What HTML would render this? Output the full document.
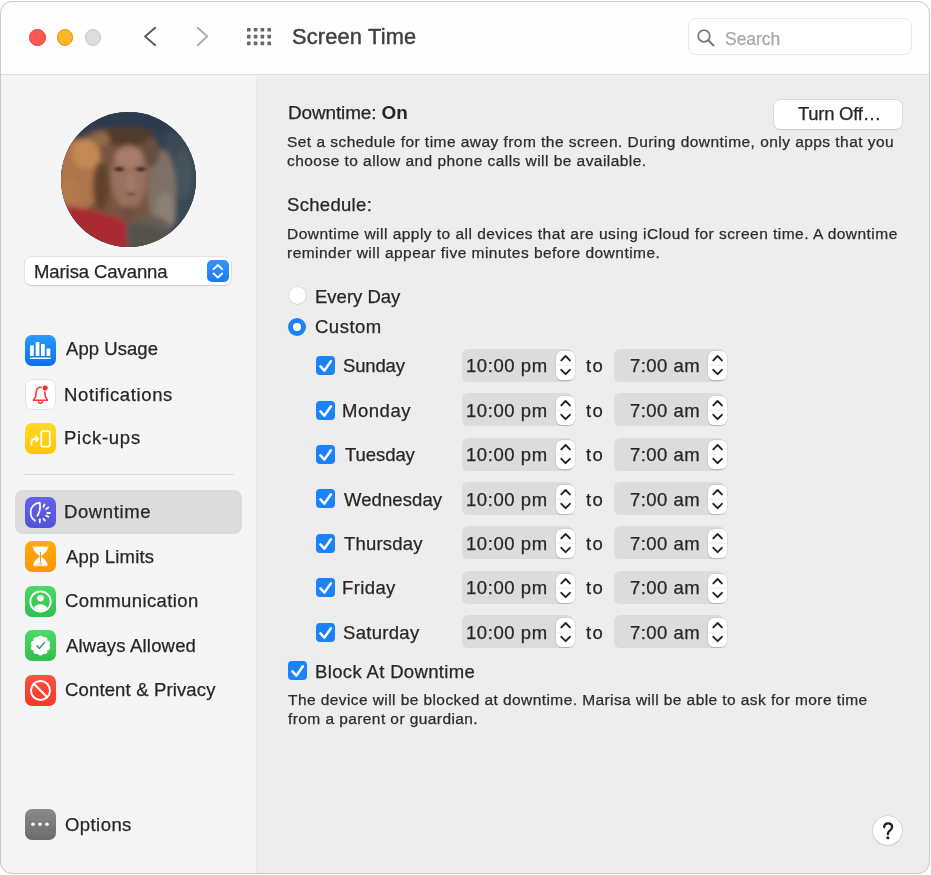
<!DOCTYPE html>
<html><head><meta charset="utf-8"><style>
*{box-sizing:border-box}
html,body{margin:0;padding:0;width:931px;height:875px;overflow:hidden;background:#fff;font-family:"Liberation Sans",sans-serif;color:#262626}
.clip{position:absolute;left:0;top:0;width:931px;height:875px;clip-path:inset(1px 1px 1px 0px round 12px);background:#ededed}
.frame{position:absolute;left:0;top:1px;width:930px;height:873px;border:1px solid #c9c9c9;border-radius:12px;pointer-events:none}
.a{position:absolute;white-space:nowrap;line-height:1;will-change:transform;-webkit-text-stroke:0.25px currentColor}
.titlebar{position:absolute;left:0;top:0;width:931px;height:75px;background:#fefefe;border-bottom:1px solid #dedede}
.sidebar{position:absolute;left:0;top:75px;width:256px;height:800px;background:#f5f5f5}
.sep{position:absolute;left:256px;top:75px;width:4px;height:800px;background:linear-gradient(90deg,#e6e6e6,#ebebeb 40%,#ededed)}
.dot{position:absolute;width:16.6px;height:16.6px;border-radius:50%}
.icon{position:absolute;left:25px;width:31px;height:31px;border-radius:7px;overflow:hidden}
.icon svg{position:absolute;left:0;top:0}
.cb{position:absolute;width:19px;height:19px;border-radius:4px;background:#1a82fb}
.cb svg{position:absolute;left:0;top:0}
</style></head><body>
<div class="clip">
<div class="titlebar"></div>
<div class="dot" style="left:29.1px;top:29.2px;background:#fe5a52;border:1px solid #d8443d"></div>
<div class="dot" style="left:56.8px;top:29.2px;background:#feb526;border:1px solid #d69b28"></div>
<div class="dot" style="left:84.6px;top:29.2px;background:#dedede;border:1px solid #c8c8c8"></div>
<svg class="a" style="left:140px;top:24px" width="20" height="26" viewBox="0 0 20 26"><path d="M15.2 3.8 L5 12.4 L15.2 21.2" fill="none" stroke="#555" stroke-width="1.9" stroke-linecap="round" stroke-linejoin="round"/></svg>
<svg class="a" style="left:191px;top:24px" width="20" height="26" viewBox="0 0 20 26"><path d="M6.7 3.8 L16.3 12.4 L6.7 21.2" fill="none" stroke="#aaa" stroke-width="1.9" stroke-linecap="round" stroke-linejoin="round"/></svg>
<svg class="a" style="left:246px;top:27px" width="26" height="20" viewBox="0 0 26 20"><g fill="#666"><rect x="1.0" y="1.0" width="3.6" height="3.6" rx="0.6"/><rect x="7.8" y="1.0" width="3.6" height="3.6" rx="0.6"/><rect x="14.6" y="1.0" width="3.6" height="3.6" rx="0.6"/><rect x="21.4" y="1.0" width="3.6" height="3.6" rx="0.6"/><rect x="1.0" y="7.8" width="3.6" height="3.6" rx="0.6"/><rect x="7.8" y="7.8" width="3.6" height="3.6" rx="0.6"/><rect x="14.6" y="7.8" width="3.6" height="3.6" rx="0.6"/><rect x="21.4" y="7.8" width="3.6" height="3.6" rx="0.6"/><rect x="1.0" y="14.6" width="3.6" height="3.6" rx="0.6"/><rect x="7.8" y="14.6" width="3.6" height="3.6" rx="0.6"/><rect x="14.6" y="14.6" width="3.6" height="3.6" rx="0.6"/><rect x="21.4" y="14.6" width="3.6" height="3.6" rx="0.6"/></g></svg>
<div class="a" style="left:291.8px;top:26.4px;font-size:21.8px;letter-spacing:0.18px;color:#404040;-webkit-text-stroke:0.45px #404040">Screen Time</div>
<div class="a" style="left:688px;top:18px;width:224px;height:37px;border:1px solid #e8e8e8;border-radius:8px;background:#fff"></div>
<svg class="a" style="left:696px;top:28px" width="22" height="20" viewBox="0 0 22 20"><circle cx="8" cy="8" r="5.8" fill="none" stroke="#777" stroke-width="1.8"/><path d="M12.2 12.2 L17.5 17.5" stroke="#777" stroke-width="2" stroke-linecap="round"/></svg>
<div class="a" style="left:725.4px;top:31px;font-size:17.5px;letter-spacing:-0.04px;color:#a9a9a9">Search</div>
<div class="sidebar"></div><div class="sep"></div><div class="a" style="left:256px;top:75px;width:675px;height:5px;background:linear-gradient(#f3f3f3,#ededed)"></div>
<div class="a" style="left:61.2px;top:111.5px;width:135px;height:135px;border-radius:50%;overflow:hidden;background:#4a4f55"><svg width="135" height="135" viewBox="0 0 135 135" style="position:absolute;left:0;top:0"><defs><filter id="blr" x="-20%" y="-20%" width="140%" height="140%"><feGaussianBlur stdDeviation="2.6"/></filter><filter id="blr2"><feGaussianBlur stdDeviation="1.2"/></filter></defs>
<rect width="135" height="135" fill="#323e4e"/>
<g filter="url(#blr)">
<rect x="0" y="0" width="135" height="20" fill="#2e3b50"/>
<rect x="104" y="20" width="36" height="95" fill="#3b4856"/>
<ellipse cx="122" cy="62" rx="9" ry="26" fill="#45525c"/>
<ellipse cx="54" cy="72" rx="60" ry="56" fill="#775440"/>
<ellipse cx="17" cy="62" rx="25" ry="36" fill="#ad7548"/>
<ellipse cx="25" cy="42" rx="14" ry="15" fill="#c28955"/>
<ellipse cx="8" cy="80" rx="12" ry="14" fill="#b07a4c"/>
<ellipse cx="40" cy="74" rx="8" ry="24" fill="#5e432f"/>
<ellipse cx="66" cy="24" rx="27" ry="10" fill="#513a2c"/>
<ellipse cx="40" cy="27" rx="9" ry="7" fill="#93694a"/>
<ellipse cx="101" cy="80" rx="14" ry="42" fill="#7f7167"/>
<ellipse cx="104" cy="100" rx="10" ry="20" fill="#8c7f73"/>
<ellipse cx="90" cy="40" rx="9" ry="15" fill="#654f42"/>
<ellipse cx="90" cy="118" rx="20" ry="14" fill="#655d56"/>
<ellipse cx="68" cy="65" rx="18" ry="32" fill="#9a7060"/>
<ellipse cx="68" cy="45" rx="14" ry="10" fill="#a97d6c"/>
<ellipse cx="70" cy="70" rx="5" ry="9" fill="#a47a6a"/>
<path d="M6 94 C22 96 45 100 65 110 L66 140 L6 140 Z" fill="#aa2a33"/>
<path d="M66 112 C80 110 100 116 125 124 L125 140 L66 140 Z" fill="#57524e"/>
<ellipse cx="67" cy="101" rx="8" ry="7" fill="#70503f"/>
</g>
<g filter="url(#blr2)">
<ellipse cx="58" cy="57" rx="6" ry="2.6" fill="#5a3e36" opacity="0.8"/>
<ellipse cx="80" cy="57" rx="6" ry="2.6" fill="#5a3e36" opacity="0.8"/>
<ellipse cx="58" cy="57.5" rx="3" ry="1.3" fill="#2e201c" opacity="0.9"/>
<ellipse cx="80" cy="57.5" rx="3" ry="1.3" fill="#2e201c" opacity="0.9"/>
<ellipse cx="70" cy="82" rx="5" ry="1.3" fill="#6a4640" opacity="0.7"/>
</g>
</svg>
</div>
<div class="a" style="left:25.2px;top:256.8px;width:206.2px;height:28px;background:#fff;border-radius:6px;box-shadow:0 0 0 0.5px rgba(0,0,0,0.14),0 1px 1.5px rgba(0,0,0,0.10)"></div>
<div class="a" style="left:34.3px;top:263.3px;font-size:18.5px;letter-spacing:-0.085px">Marisa Cavanna</div>
<div class="a" style="left:207.2px;top:259.6px;width:21.8px;height:22.4px;border-radius:5px;background:linear-gradient(#3594ff,#1a7af5)"><svg width="22" height="23" viewBox="0 0 22 23" style="position:absolute;left:0;top:0"><path d="M6.6 9.1 L10.9 5 L15.2 9.1 M6.6 13.5 L10.9 17.6 L15.2 13.5" fill="none" stroke="#fff" stroke-width="1.9" stroke-linecap="round" stroke-linejoin="round"/></svg></div>
<div class="a" style="left:24px;top:474px;width:210px;height:1px;background:#dadada"></div>
<div class="a" style="left:15px;top:490px;width:227px;height:44px;border-radius:8px;background:#dcdcdc"></div>
<div class="icon" style="top:334.9px"><svg width="31" height="31" viewBox="0 0 31 31"><defs><linearGradient id="gAU" x1="0" y1="0" x2="0" y2="1"><stop offset="0" stop-color="#2a9bff"/><stop offset="1" stop-color="#0a6fe8"/></linearGradient></defs><rect width="31" height="31" fill="url(#gAU)"/><g fill="#fff"><rect x="5.1" y="10.2" width="3.7" height="10.9" rx="0.7"/><rect x="10.7" y="7" width="3.7" height="14.1" rx="0.7"/><rect x="16" y="9" width="3.8" height="12.1" rx="0.7"/><rect x="21.5" y="13.6" width="3.8" height="7.5" rx="0.7"/><rect x="5" y="22.4" width="21" height="1.5" rx="0.6"/></g></svg></div>
<div class="a" style="left:65.6px;top:340.4px;font-size:18.5px;letter-spacing:0.05px">App Usage</div>
<div class="icon" style="top:378.7px"><svg width="31" height="31" viewBox="0 0 31 31"><rect x="0.5" y="0.5" width="30" height="30" rx="6.5" fill="#fdfdfd" stroke="#e1e1e1"/><path d="M15.5 8.2 C12.9 8.2 11.4 10.6 11.1 13.4 L10.7 17.6 L8.6 21.2 L22.4 21.2 L20.3 17.6 L19.9 13.4 C19.6 10.6 18.1 8.2 15.5 8.2 Z" fill="none" stroke="#ef3d35" stroke-width="1.6" stroke-linejoin="round"/><path d="M13.5 22.3 A2 2 0 0 0 17.5 22.3" fill="none" stroke="#ef3d35" stroke-width="1.5"/><circle cx="20.2" cy="9" r="3.1" fill="#ef2f2a" stroke="#fdfdfd" stroke-width="1"/></svg></div>
<div class="a" style="left:63.6px;top:385.5px;font-size:18.5px;letter-spacing:0.633px">Notifications</div>
<div class="icon" style="top:423.2px"><svg width="31" height="31" viewBox="0 0 31 31"><defs><linearGradient id="gPU" x1="0" y1="0" x2="0" y2="1"><stop offset="0" stop-color="#ffd829"/><stop offset="1" stop-color="#ffc700"/></linearGradient></defs><rect width="31" height="31" fill="url(#gPU)"/><rect x="16.2" y="8.2" width="8.6" height="15.4" rx="1.4" fill="none" stroke="#fff" stroke-width="1.8"/><path d="M6.4 22 L6.4 19.5 Q6.4 16 9.8 16 L12.4 16" fill="none" stroke="#fff" stroke-width="1.8" stroke-linecap="round"/><path d="M10.6 13.4 L13.2 16 L10.6 18.6" fill="none" stroke="#fff" stroke-width="1.8" stroke-linecap="round" stroke-linejoin="round"/></svg></div>
<div class="a" style="left:63.6px;top:429.4px;font-size:18.5px;letter-spacing:0.743px">Pick-ups</div>
<div class="icon" style="top:496.7px"><svg width="31" height="31" viewBox="0 0 31 31"><defs><linearGradient id="gDT" x1="0" y1="0" x2="0" y2="1"><stop offset="0" stop-color="#6462ec"/><stop offset="1" stop-color="#5352d8"/></linearGradient></defs><rect width="31" height="31" fill="url(#gDT)"/><path d="M14.6 5.7 C9.6 6.3 5.6 10 5.6 15 C5.6 19 7.6 22.2 10 23.8" fill="none" stroke="#fff" stroke-width="1.7" stroke-linecap="round"/><path d="M14.8 6.2 C15.4 9.5 15.2 14.5 12.4 18.8" fill="none" stroke="#fff" stroke-width="1.7" stroke-linecap="round"/><g stroke="#fff" stroke-width="1.8" stroke-linecap="round"><path d="M19.5 7.5 L18.4 9.8"/><path d="M23.3 10.5 L21.1 12"/><path d="M25 16 L22.4 16"/><path d="M23.3 19.8 L21.1 18.6"/><path d="M19.9 23.6 L18.5 21.7"/><path d="M14.8 25.3 L14.8 22.3"/></g></svg></div>
<div class="a" style="left:63.6px;top:503.2px;font-size:18.5px;letter-spacing:0.6px">Downtime</div>
<div class="icon" style="top:541.4px"><svg width="31" height="31" viewBox="0 0 31 31"><defs><linearGradient id="gAL" x1="0" y1="0" x2="0" y2="1"><stop offset="0" stop-color="#ffab12"/><stop offset="1" stop-color="#ff9500"/></linearGradient></defs><rect width="31" height="31" fill="url(#gAL)"/><path d="M8.2 6 L22.8 6 Q22.8 9.6 19.4 12.4 L16.3 15 L16.3 15.6 L19.4 18.3 Q22.8 21.2 22.8 24.8 L8.2 24.8 Q8.2 21.2 11.6 18.3 L14.7 15.6 L14.7 15 L11.6 12.4 Q8.2 9.6 8.2 6 Z" fill="#fff"/><path d="M15.5 11 L15.5 21.5" stroke="#e0a030" stroke-width="1.1"/><path d="M12.5 23.6 Q15.5 19.8 18.5 23.6 Z" fill="#f5c060"/><rect x="7.2" y="4.8" width="16.6" height="1" fill="#ffd060"/><rect x="7.2" y="24.8" width="16.6" height="1" fill="#ffb040"/></svg></div>
<div class="a" style="left:65.6px;top:547.7px;font-size:18.5px;letter-spacing:0.189px">App Limits</div>
<div class="icon" style="top:585.7px"><svg width="31" height="31" viewBox="0 0 31 31"><defs><linearGradient id="gCM" x1="0" y1="0" x2="0" y2="1"><stop offset="0" stop-color="#4cd964"/><stop offset="1" stop-color="#30c04f"/></linearGradient></defs><rect width="31" height="31" fill="url(#gCM)"/><circle cx="15.5" cy="15.5" r="10.2" fill="none" stroke="#fff" stroke-width="1.8"/><circle cx="15.5" cy="12.3" r="3.2" fill="#fff"/><path d="M9 22 Q10.8 18.3 15.5 18.3 Q20.2 18.3 22 22 Q19.3 24.8 15.5 24.8 Q11.7 24.8 9 22 Z" fill="#fff"/></svg></div>
<div class="a" style="left:64.6px;top:591.8px;font-size:18.5px;letter-spacing:0.4px">Communication</div>
<div class="icon" style="top:630.0px"><svg width="31" height="31" viewBox="0 0 31 31"><defs><linearGradient id="gAA" x1="0" y1="0" x2="0" y2="1"><stop offset="0" stop-color="#4cd964"/><stop offset="1" stop-color="#30c04f"/></linearGradient></defs><rect width="31" height="31" fill="url(#gAA)"/><g fill="#fff"><circle cx="15.5" cy="15.5" r="8"/><circle cx="22.38" cy="17.63" r="2.7"/><circle cx="19.81" cy="21.26" r="2.7"/><circle cx="15.60" cy="22.70" r="2.7"/><circle cx="11.35" cy="21.38" r="2.7"/><circle cx="8.68" cy="17.82" r="2.7"/><circle cx="8.62" cy="13.37" r="2.7"/><circle cx="11.19" cy="9.74" r="2.7"/><circle cx="15.40" cy="8.30" r="2.7"/><circle cx="19.65" cy="9.62" r="2.7"/><circle cx="22.32" cy="13.18" r="2.7"/></g><path d="M11.8 15.8 L14.4 18.4 L19.4 12.6" fill="none" stroke="#4a9a5e" stroke-width="1.6" stroke-linecap="round" stroke-linejoin="round"/></svg></div>
<div class="a" style="left:65.6px;top:636.8px;font-size:18.5px;letter-spacing:0.185px">Always Allowed</div>
<div class="icon" style="top:674.7px"><svg width="31" height="31" viewBox="0 0 31 31"><defs><linearGradient id="gCP" x1="0" y1="0" x2="0" y2="1"><stop offset="0" stop-color="#ff4f3f"/><stop offset="1" stop-color="#f2392c"/></linearGradient></defs><rect width="31" height="31" fill="url(#gCP)"/><circle cx="15.5" cy="15.5" r="9.5" fill="none" stroke="#fff" stroke-width="2"/><path d="M9 9 L22 22" stroke="#fff" stroke-width="2"/></svg></div>
<div class="a" style="left:64.6px;top:681.1px;font-size:18.5px;letter-spacing:0.15px">Content &amp; Privacy</div>
<div class="icon" style="top:809.2px"><svg width="31" height="31" viewBox="0 0 31 31"><defs><linearGradient id="gOP" x1="0" y1="0" x2="0" y2="1"><stop offset="0" stop-color="#8a8a8a"/><stop offset="1" stop-color="#6b6b6b"/></linearGradient></defs><rect width="31" height="31" fill="url(#gOP)"/><g fill="#fff"><circle cx="8" cy="15.2" r="1.8"/><circle cx="15" cy="15.2" r="1.8"/><circle cx="22" cy="15.2" r="1.8"/></g></svg></div>
<div class="a" style="left:64.6px;top:815.5px;font-size:18.5px;letter-spacing:0.433px">Options</div>
<div class="a" style="left:287.9px;top:104.3px;font-size:18.9px;letter-spacing:-0.091px">Downtime: <b style="font-weight:700;-webkit-text-stroke:0px">On</b></div>
<div class="a" style="left:774px;top:99.5px;width:127.5px;height:28.5px;background:#fff;border-radius:6px;box-shadow:0 0 0 0.5px rgba(0,0,0,0.15),0 1px 1px rgba(0,0,0,0.08)"></div>
<div class="a" style="left:797.7px;top:104.7px;font-size:18.5px;letter-spacing:-0.275px">Turn Off…</div>
<div class="a" style="left:287px;top:133.8px;font-size:15.5px;letter-spacing:0.454px;color:#2b2b2b">Set a schedule for time away from the screen. During downtime, only apps that you</div>
<div class="a" style="left:287px;top:152.8px;font-size:15.5px;letter-spacing:0.454px;color:#2b2b2b">choose to allow and phone calls will be available.</div>
<div class="a" style="left:287.3px;top:196px;font-size:18.5px;letter-spacing:0.312px">Schedule:</div>
<div class="a" style="left:287px;top:225.8px;font-size:15.5px;letter-spacing:0.471px;color:#2b2b2b">Downtime will apply to all devices that are using iCloud for screen time. A downtime</div>
<div class="a" style="left:287px;top:244.8px;font-size:15.5px;letter-spacing:0.471px;color:#2b2b2b">reminder will appear five minutes before downtime.</div>
<div class="a" style="left:288px;top:692.2px;font-size:15.5px;letter-spacing:0.418px;color:#2b2b2b">The device will be blocked at downtime. Marisa will be able to ask for more time</div>
<div class="a" style="left:288px;top:711.4px;font-size:15.5px;letter-spacing:0.418px;color:#2b2b2b">from a parent or guardian.</div>
<div class="a" style="left:288.7px;top:287.3px;width:17.2px;height:17.2px;border-radius:50%;background:#fff;box-shadow:0 0 0 0.5px rgba(0,0,0,0.10),0 0.5px 1.5px rgba(0,0,0,0.12)"></div>
<div class="a" style="left:314.6px;top:288px;font-size:18.5px;letter-spacing:0.0px">Every Day</div>
<div class="a" style="left:288.4px;top:317.5px;width:18px;height:18px;border-radius:50%;background:#1b83f8"><div style="position:absolute;left:5.3px;top:5.3px;width:7.4px;height:7.4px;border-radius:50%;background:#fff"></div></div>
<div class="a" style="left:315px;top:317.9px;font-size:18.5px;letter-spacing:0.5px">Custom</div>
<div class="cb" style="left:315.5px;top:356.1px"><svg width="19" height="19" viewBox="0 0 19 19"><path d="M4.4 10.4 L8.4 14.6 L14.9 5.3" fill="none" stroke="#fff" stroke-width="2.5" stroke-linecap="round" stroke-linejoin="round"/></svg></div>
<div class="a" style="left:342.8px;top:357.2px;font-size:18.5px;letter-spacing:-0.16px">Sunday</div>
<div class="a" style="left:461.5px;top:348.6px;width:111px;height:32.5px;border-radius:6px;background:#dcdcdc"></div>
<div class="a" style="left:466.4px;top:357.2px;font-size:18.5px;letter-spacing:0.571px">10:00 pm</div>
<div class="a" style="left:555.5px;top:351.3px;width:19px;height:28.5px;border-radius:6px;background:#fff;box-shadow:0 0 0 0.5px rgba(0,0,0,0.10),0 0.5px 1px rgba(0,0,0,0.14)"><svg width="19" height="29" viewBox="0 0 19 29" style="position:absolute;left:0;top:0"><path d="M1 14.2 L18 14.2" stroke="#e4e4e4" stroke-width="0.8"/><path d="M5.3 9.4 L9.6 5 L13.9 9.4 M5.3 18.8 L9.6 23.2 L13.9 18.8" fill="none" stroke="#222" stroke-width="1.9" stroke-linecap="round" stroke-linejoin="round"/></svg></div>
<div class="a" style="left:585.6px;top:357.2px;font-size:18.5px;letter-spacing:1.4px">to</div>
<div class="a" style="left:614px;top:348.6px;width:110px;height:32.5px;border-radius:6px;background:#dcdcdc"></div>
<div class="a" style="left:629.8px;top:357.2px;font-size:18.5px;letter-spacing:0.45px">7:00 am</div>
<div class="a" style="left:707.5px;top:351.3px;width:19px;height:28.5px;border-radius:6px;background:#fff;box-shadow:0 0 0 0.5px rgba(0,0,0,0.10),0 0.5px 1px rgba(0,0,0,0.14)"><svg width="19" height="29" viewBox="0 0 19 29" style="position:absolute;left:0;top:0"><path d="M1 14.2 L18 14.2" stroke="#e4e4e4" stroke-width="0.8"/><path d="M5.3 9.4 L9.6 5 L13.9 9.4 M5.3 18.8 L9.6 23.2 L13.9 18.8" fill="none" stroke="#222" stroke-width="1.9" stroke-linecap="round" stroke-linejoin="round"/></svg></div>
<div class="cb" style="left:315.5px;top:400.5px"><svg width="19" height="19" viewBox="0 0 19 19"><path d="M4.4 10.4 L8.4 14.6 L14.9 5.3" fill="none" stroke="#fff" stroke-width="2.5" stroke-linecap="round" stroke-linejoin="round"/></svg></div>
<div class="a" style="left:341.8px;top:401.6px;font-size:18.5px;letter-spacing:0.54px">Monday</div>
<div class="a" style="left:461.5px;top:393.0px;width:111px;height:32.5px;border-radius:6px;background:#dcdcdc"></div>
<div class="a" style="left:466.4px;top:401.6px;font-size:18.5px;letter-spacing:0.571px">10:00 pm</div>
<div class="a" style="left:555.5px;top:395.7px;width:19px;height:28.5px;border-radius:6px;background:#fff;box-shadow:0 0 0 0.5px rgba(0,0,0,0.10),0 0.5px 1px rgba(0,0,0,0.14)"><svg width="19" height="29" viewBox="0 0 19 29" style="position:absolute;left:0;top:0"><path d="M1 14.2 L18 14.2" stroke="#e4e4e4" stroke-width="0.8"/><path d="M5.3 9.4 L9.6 5 L13.9 9.4 M5.3 18.8 L9.6 23.2 L13.9 18.8" fill="none" stroke="#222" stroke-width="1.9" stroke-linecap="round" stroke-linejoin="round"/></svg></div>
<div class="a" style="left:585.6px;top:401.6px;font-size:18.5px;letter-spacing:1.4px">to</div>
<div class="a" style="left:614px;top:393.0px;width:110px;height:32.5px;border-radius:6px;background:#dcdcdc"></div>
<div class="a" style="left:629.8px;top:401.6px;font-size:18.5px;letter-spacing:0.45px">7:00 am</div>
<div class="a" style="left:707.5px;top:395.7px;width:19px;height:28.5px;border-radius:6px;background:#fff;box-shadow:0 0 0 0.5px rgba(0,0,0,0.10),0 0.5px 1px rgba(0,0,0,0.14)"><svg width="19" height="29" viewBox="0 0 19 29" style="position:absolute;left:0;top:0"><path d="M1 14.2 L18 14.2" stroke="#e4e4e4" stroke-width="0.8"/><path d="M5.3 9.4 L9.6 5 L13.9 9.4 M5.3 18.8 L9.6 23.2 L13.9 18.8" fill="none" stroke="#222" stroke-width="1.9" stroke-linecap="round" stroke-linejoin="round"/></svg></div>
<div class="cb" style="left:315.5px;top:445.0px"><svg width="19" height="19" viewBox="0 0 19 19"><path d="M4.4 10.4 L8.4 14.6 L14.9 5.3" fill="none" stroke="#fff" stroke-width="2.5" stroke-linecap="round" stroke-linejoin="round"/></svg></div>
<div class="a" style="left:344.5px;top:446.1px;font-size:18.5px;letter-spacing:-0.067px">Tuesday</div>
<div class="a" style="left:461.5px;top:437.5px;width:111px;height:32.5px;border-radius:6px;background:#dcdcdc"></div>
<div class="a" style="left:466.4px;top:446.1px;font-size:18.5px;letter-spacing:0.571px">10:00 pm</div>
<div class="a" style="left:555.5px;top:440.2px;width:19px;height:28.5px;border-radius:6px;background:#fff;box-shadow:0 0 0 0.5px rgba(0,0,0,0.10),0 0.5px 1px rgba(0,0,0,0.14)"><svg width="19" height="29" viewBox="0 0 19 29" style="position:absolute;left:0;top:0"><path d="M1 14.2 L18 14.2" stroke="#e4e4e4" stroke-width="0.8"/><path d="M5.3 9.4 L9.6 5 L13.9 9.4 M5.3 18.8 L9.6 23.2 L13.9 18.8" fill="none" stroke="#222" stroke-width="1.9" stroke-linecap="round" stroke-linejoin="round"/></svg></div>
<div class="a" style="left:585.6px;top:446.1px;font-size:18.5px;letter-spacing:1.4px">to</div>
<div class="a" style="left:614px;top:437.5px;width:110px;height:32.5px;border-radius:6px;background:#dcdcdc"></div>
<div class="a" style="left:629.8px;top:446.1px;font-size:18.5px;letter-spacing:0.45px">7:00 am</div>
<div class="a" style="left:707.5px;top:440.2px;width:19px;height:28.5px;border-radius:6px;background:#fff;box-shadow:0 0 0 0.5px rgba(0,0,0,0.10),0 0.5px 1px rgba(0,0,0,0.14)"><svg width="19" height="29" viewBox="0 0 19 29" style="position:absolute;left:0;top:0"><path d="M1 14.2 L18 14.2" stroke="#e4e4e4" stroke-width="0.8"/><path d="M5.3 9.4 L9.6 5 L13.9 9.4 M5.3 18.8 L9.6 23.2 L13.9 18.8" fill="none" stroke="#222" stroke-width="1.9" stroke-linecap="round" stroke-linejoin="round"/></svg></div>
<div class="cb" style="left:315.5px;top:489.4px"><svg width="19" height="19" viewBox="0 0 19 19"><path d="M4.4 10.4 L8.4 14.6 L14.9 5.3" fill="none" stroke="#fff" stroke-width="2.5" stroke-linecap="round" stroke-linejoin="round"/></svg></div>
<div class="a" style="left:343.8px;top:490.5px;font-size:18.5px;letter-spacing:0.087px">Wednesday</div>
<div class="a" style="left:461.5px;top:481.9px;width:111px;height:32.5px;border-radius:6px;background:#dcdcdc"></div>
<div class="a" style="left:466.4px;top:490.5px;font-size:18.5px;letter-spacing:0.571px">10:00 pm</div>
<div class="a" style="left:555.5px;top:484.6px;width:19px;height:28.5px;border-radius:6px;background:#fff;box-shadow:0 0 0 0.5px rgba(0,0,0,0.10),0 0.5px 1px rgba(0,0,0,0.14)"><svg width="19" height="29" viewBox="0 0 19 29" style="position:absolute;left:0;top:0"><path d="M1 14.2 L18 14.2" stroke="#e4e4e4" stroke-width="0.8"/><path d="M5.3 9.4 L9.6 5 L13.9 9.4 M5.3 18.8 L9.6 23.2 L13.9 18.8" fill="none" stroke="#222" stroke-width="1.9" stroke-linecap="round" stroke-linejoin="round"/></svg></div>
<div class="a" style="left:585.6px;top:490.5px;font-size:18.5px;letter-spacing:1.4px">to</div>
<div class="a" style="left:614px;top:481.9px;width:110px;height:32.5px;border-radius:6px;background:#dcdcdc"></div>
<div class="a" style="left:629.8px;top:490.5px;font-size:18.5px;letter-spacing:0.45px">7:00 am</div>
<div class="a" style="left:707.5px;top:484.6px;width:19px;height:28.5px;border-radius:6px;background:#fff;box-shadow:0 0 0 0.5px rgba(0,0,0,0.10),0 0.5px 1px rgba(0,0,0,0.14)"><svg width="19" height="29" viewBox="0 0 19 29" style="position:absolute;left:0;top:0"><path d="M1 14.2 L18 14.2" stroke="#e4e4e4" stroke-width="0.8"/><path d="M5.3 9.4 L9.6 5 L13.9 9.4 M5.3 18.8 L9.6 23.2 L13.9 18.8" fill="none" stroke="#222" stroke-width="1.9" stroke-linecap="round" stroke-linejoin="round"/></svg></div>
<div class="cb" style="left:315.5px;top:533.8px"><svg width="19" height="19" viewBox="0 0 19 19"><path d="M4.4 10.4 L8.4 14.6 L14.9 5.3" fill="none" stroke="#fff" stroke-width="2.5" stroke-linecap="round" stroke-linejoin="round"/></svg></div>
<div class="a" style="left:343.8px;top:534.9px;font-size:18.5px;letter-spacing:0.186px">Thursday</div>
<div class="a" style="left:461.5px;top:526.3px;width:111px;height:32.5px;border-radius:6px;background:#dcdcdc"></div>
<div class="a" style="left:466.4px;top:534.9px;font-size:18.5px;letter-spacing:0.571px">10:00 pm</div>
<div class="a" style="left:555.5px;top:529.0px;width:19px;height:28.5px;border-radius:6px;background:#fff;box-shadow:0 0 0 0.5px rgba(0,0,0,0.10),0 0.5px 1px rgba(0,0,0,0.14)"><svg width="19" height="29" viewBox="0 0 19 29" style="position:absolute;left:0;top:0"><path d="M1 14.2 L18 14.2" stroke="#e4e4e4" stroke-width="0.8"/><path d="M5.3 9.4 L9.6 5 L13.9 9.4 M5.3 18.8 L9.6 23.2 L13.9 18.8" fill="none" stroke="#222" stroke-width="1.9" stroke-linecap="round" stroke-linejoin="round"/></svg></div>
<div class="a" style="left:585.6px;top:534.9px;font-size:18.5px;letter-spacing:1.4px">to</div>
<div class="a" style="left:614px;top:526.3px;width:110px;height:32.5px;border-radius:6px;background:#dcdcdc"></div>
<div class="a" style="left:629.8px;top:534.9px;font-size:18.5px;letter-spacing:0.45px">7:00 am</div>
<div class="a" style="left:707.5px;top:529.0px;width:19px;height:28.5px;border-radius:6px;background:#fff;box-shadow:0 0 0 0.5px rgba(0,0,0,0.10),0 0.5px 1px rgba(0,0,0,0.14)"><svg width="19" height="29" viewBox="0 0 19 29" style="position:absolute;left:0;top:0"><path d="M1 14.2 L18 14.2" stroke="#e4e4e4" stroke-width="0.8"/><path d="M5.3 9.4 L9.6 5 L13.9 9.4 M5.3 18.8 L9.6 23.2 L13.9 18.8" fill="none" stroke="#222" stroke-width="1.9" stroke-linecap="round" stroke-linejoin="round"/></svg></div>
<div class="cb" style="left:315.5px;top:578.2px"><svg width="19" height="19" viewBox="0 0 19 19"><path d="M4.4 10.4 L8.4 14.6 L14.9 5.3" fill="none" stroke="#fff" stroke-width="2.5" stroke-linecap="round" stroke-linejoin="round"/></svg></div>
<div class="a" style="left:341.8px;top:579.4px;font-size:18.5px;letter-spacing:0.38px">Friday</div>
<div class="a" style="left:461.5px;top:570.8px;width:111px;height:32.5px;border-radius:6px;background:#dcdcdc"></div>
<div class="a" style="left:466.4px;top:579.4px;font-size:18.5px;letter-spacing:0.571px">10:00 pm</div>
<div class="a" style="left:555.5px;top:573.5px;width:19px;height:28.5px;border-radius:6px;background:#fff;box-shadow:0 0 0 0.5px rgba(0,0,0,0.10),0 0.5px 1px rgba(0,0,0,0.14)"><svg width="19" height="29" viewBox="0 0 19 29" style="position:absolute;left:0;top:0"><path d="M1 14.2 L18 14.2" stroke="#e4e4e4" stroke-width="0.8"/><path d="M5.3 9.4 L9.6 5 L13.9 9.4 M5.3 18.8 L9.6 23.2 L13.9 18.8" fill="none" stroke="#222" stroke-width="1.9" stroke-linecap="round" stroke-linejoin="round"/></svg></div>
<div class="a" style="left:585.6px;top:579.4px;font-size:18.5px;letter-spacing:1.4px">to</div>
<div class="a" style="left:614px;top:570.8px;width:110px;height:32.5px;border-radius:6px;background:#dcdcdc"></div>
<div class="a" style="left:629.8px;top:579.4px;font-size:18.5px;letter-spacing:0.45px">7:00 am</div>
<div class="a" style="left:707.5px;top:573.5px;width:19px;height:28.5px;border-radius:6px;background:#fff;box-shadow:0 0 0 0.5px rgba(0,0,0,0.10),0 0.5px 1px rgba(0,0,0,0.14)"><svg width="19" height="29" viewBox="0 0 19 29" style="position:absolute;left:0;top:0"><path d="M1 14.2 L18 14.2" stroke="#e4e4e4" stroke-width="0.8"/><path d="M5.3 9.4 L9.6 5 L13.9 9.4 M5.3 18.8 L9.6 23.2 L13.9 18.8" fill="none" stroke="#222" stroke-width="1.9" stroke-linecap="round" stroke-linejoin="round"/></svg></div>
<div class="cb" style="left:315.5px;top:622.7px"><svg width="19" height="19" viewBox="0 0 19 19"><path d="M4.4 10.4 L8.4 14.6 L14.9 5.3" fill="none" stroke="#fff" stroke-width="2.5" stroke-linecap="round" stroke-linejoin="round"/></svg></div>
<div class="a" style="left:342.8px;top:623.8px;font-size:18.5px;letter-spacing:0.3px">Saturday</div>
<div class="a" style="left:461.5px;top:615.2px;width:111px;height:32.5px;border-radius:6px;background:#dcdcdc"></div>
<div class="a" style="left:466.4px;top:623.8px;font-size:18.5px;letter-spacing:0.571px">10:00 pm</div>
<div class="a" style="left:555.5px;top:617.9px;width:19px;height:28.5px;border-radius:6px;background:#fff;box-shadow:0 0 0 0.5px rgba(0,0,0,0.10),0 0.5px 1px rgba(0,0,0,0.14)"><svg width="19" height="29" viewBox="0 0 19 29" style="position:absolute;left:0;top:0"><path d="M1 14.2 L18 14.2" stroke="#e4e4e4" stroke-width="0.8"/><path d="M5.3 9.4 L9.6 5 L13.9 9.4 M5.3 18.8 L9.6 23.2 L13.9 18.8" fill="none" stroke="#222" stroke-width="1.9" stroke-linecap="round" stroke-linejoin="round"/></svg></div>
<div class="a" style="left:585.6px;top:623.8px;font-size:18.5px;letter-spacing:1.4px">to</div>
<div class="a" style="left:614px;top:615.2px;width:110px;height:32.5px;border-radius:6px;background:#dcdcdc"></div>
<div class="a" style="left:629.8px;top:623.8px;font-size:18.5px;letter-spacing:0.45px">7:00 am</div>
<div class="a" style="left:707.5px;top:617.9px;width:19px;height:28.5px;border-radius:6px;background:#fff;box-shadow:0 0 0 0.5px rgba(0,0,0,0.10),0 0.5px 1px rgba(0,0,0,0.14)"><svg width="19" height="29" viewBox="0 0 19 29" style="position:absolute;left:0;top:0"><path d="M1 14.2 L18 14.2" stroke="#e4e4e4" stroke-width="0.8"/><path d="M5.3 9.4 L9.6 5 L13.9 9.4 M5.3 18.8 L9.6 23.2 L13.9 18.8" fill="none" stroke="#222" stroke-width="1.9" stroke-linecap="round" stroke-linejoin="round"/></svg></div>
<div class="cb" style="left:288.2px;top:661.2px"><svg width="19" height="19" viewBox="0 0 19 19"><path d="M4.4 10.4 L8.4 14.6 L14.9 5.3" fill="none" stroke="#fff" stroke-width="2.5" stroke-linecap="round" stroke-linejoin="round"/></svg></div>
<div class="a" style="left:315.4px;top:662.8px;font-size:18.5px;letter-spacing:0.35px">Block At Downtime</div>
<div class="a" style="left:873.4px;top:815.7px;width:28.6px;height:28.6px;border-radius:50%;background:#fff;box-shadow:0 0 0 0.6px rgba(0,0,0,0.13),0 0.5px 2px rgba(0,0,0,0.14)"><svg width="29" height="29" viewBox="0 0 29 29" style="position:absolute;left:0;top:0"><path d="M11.2 11 C11.3 8.7 12.9 7.3 15.1 7.3 C17.4 7.3 19.1 8.8 19.1 11 C19.1 12.9 18 13.8 16.8 14.7 C15.6 15.6 14.9 16.4 14.9 17.9 L14.9 18.2" fill="none" stroke="#1e1e1e" stroke-width="2.3" stroke-linecap="round"/><circle cx="14.9" cy="21.8" r="1.55" fill="#1e1e1e"/></svg></div>
</div>
<div class="frame"></div>
</body></html>
